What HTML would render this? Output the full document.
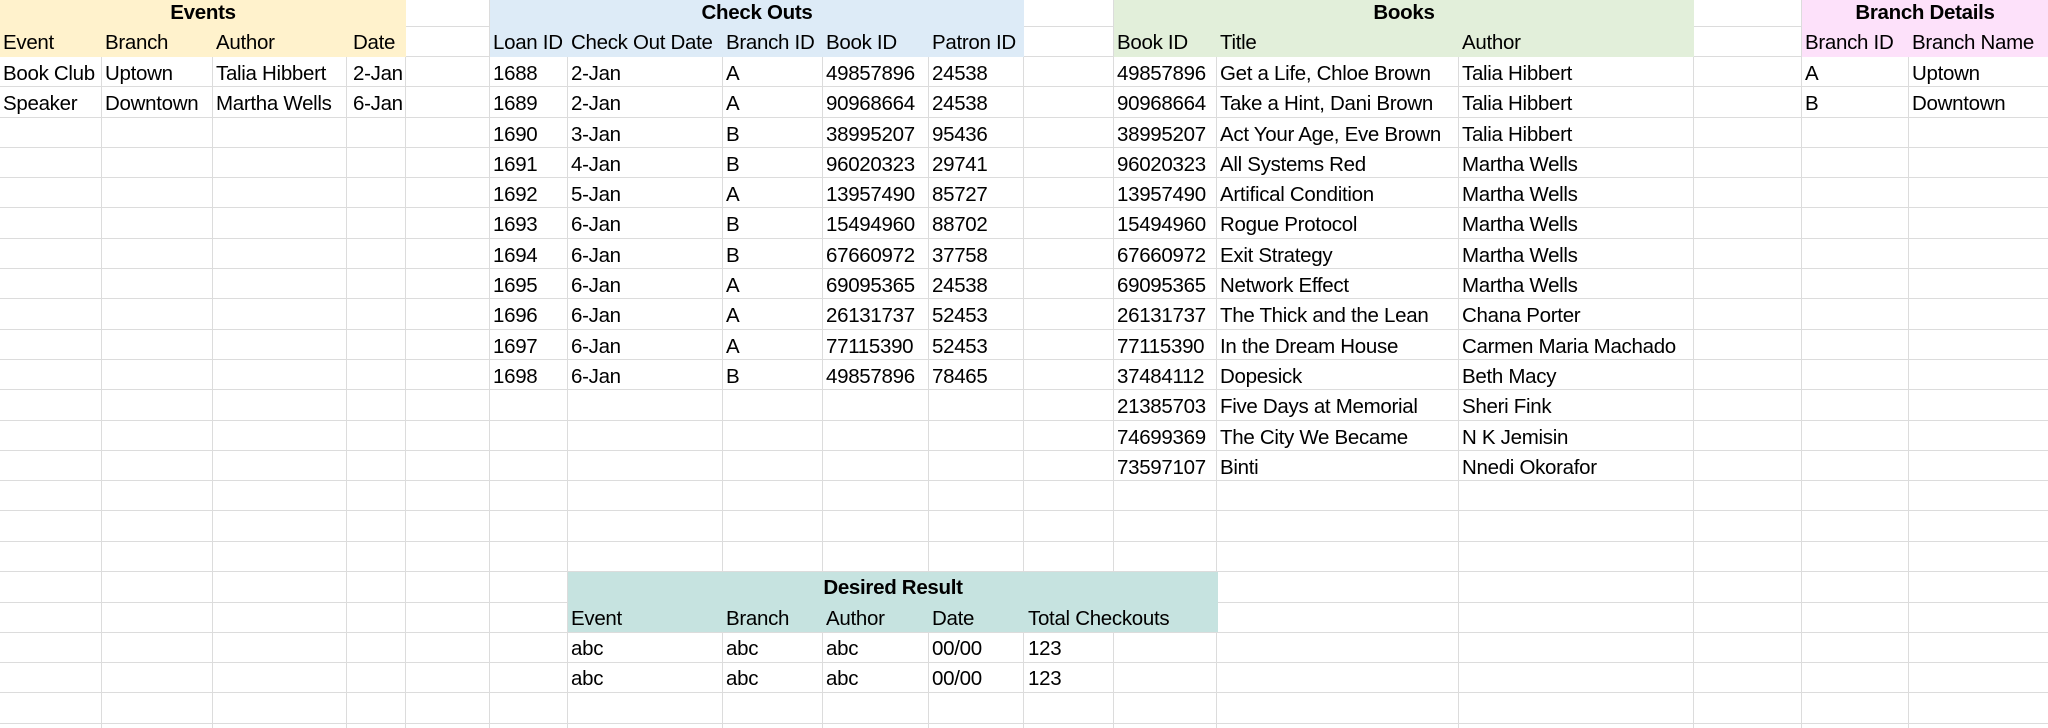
<!DOCTYPE html>
<html><head><meta charset="utf-8"><style>
*{margin:0;padding:0}
body{width:2048px;height:728px;position:relative;overflow:hidden;background:#fff;font-family:"Liberation Sans",Carlito,sans-serif;font-size:20.5px;color:#000;letter-spacing:-0.3px}
.h{position:absolute;left:0;width:2048px;height:1px;background:#dcdcdc}
.v{position:absolute;top:0;height:728px;width:1px;background:#dcdcdc}
.f{position:absolute}
.t{position:absolute;white-space:nowrap;line-height:30px;height:30px;padding-left:3px}
.b{font-weight:bold;text-align:center;padding-left:0}
</style></head><body>
<div class="h" style="top:26px"></div>
<div class="h" style="top:56px"></div>
<div class="h" style="top:86px"></div><div class="h" style="top:117px"></div><div class="h" style="top:147px"></div><div class="h" style="top:177px"></div><div class="h" style="top:207px"></div><div class="h" style="top:238px"></div><div class="h" style="top:268px"></div><div class="h" style="top:298px"></div><div class="h" style="top:329px"></div><div class="h" style="top:359px"></div><div class="h" style="top:389px"></div><div class="h" style="top:420px"></div><div class="h" style="top:450px"></div><div class="h" style="top:480px"></div><div class="h" style="top:510px"></div><div class="h" style="top:541px"></div><div class="h" style="top:571px"></div><div class="h" style="top:602px"></div><div class="h" style="top:632px"></div><div class="h" style="top:662px"></div><div class="h" style="top:692px"></div><div class="h" style="top:723px"></div>
<div class="v" style="left:101px"></div><div class="v" style="left:212px"></div><div class="v" style="left:346px"></div><div class="v" style="left:405px"></div><div class="v" style="left:489px"></div><div class="v" style="left:567px"></div><div class="v" style="left:722px"></div><div class="v" style="left:822px"></div><div class="v" style="left:928px"></div><div class="v" style="left:1023px"></div><div class="v" style="left:1113px"></div><div class="v" style="left:1216px"></div><div class="v" style="left:1458px"></div><div class="v" style="left:1693px"></div><div class="v" style="left:1801px"></div><div class="v" style="left:1908px"></div>
<div class="f" style="left:0;top:0;width:406px;height:57px;background:#fff2cc"></div>
<div class="f" style="left:490px;top:0;width:534px;height:57px;background:#ddebf7"></div>
<div class="f" style="left:1114px;top:0;width:580px;height:57px;background:#e2efda"></div>
<div class="f" style="left:1802px;top:0;width:246px;height:57px;background:#fde1fa"></div>
<div class="f" style="left:568px;top:572px;width:650px;height:60px;background:#c6e3e0"></div>

<div class="t b" style="left:0;width:406px;top:-2px">Events</div>
<div class="t b" style="left:490px;width:534px;top:-2px">Check Outs</div>
<div class="t b" style="left:1114px;width:580px;top:-2px">Books</div>
<div class="t b" style="left:1802px;width:246px;top:-2px">Branch Details</div>
<div class="t b" style="left:568px;width:650px;top:573px">Desired Result</div>

<div style="position:absolute;top:28px;left:0">
<span class="t" style="left:0">Event</span><span class="t" style="left:102px">Branch</span><span class="t" style="left:213px">Author</span><span class="t" style="left:350px">Date</span>
<span class="t" style="left:490px">Loan ID</span><span class="t" style="left:568px">Check Out Date</span><span class="t" style="left:723px">Branch ID</span><span class="t" style="left:823px">Book ID</span><span class="t" style="left:929px">Patron ID</span>
<span class="t" style="left:1114px">Book ID</span><span class="t" style="left:1217px">Title</span><span class="t" style="left:1459px">Author</span>
<span class="t" style="left:1802px">Branch ID</span><span class="t" style="left:1909px">Branch Name</span>
</div>

<div style="position:absolute;top:59px;left:0">
<span class="t" style="left:0">Book Club</span><span class="t" style="left:102px">Uptown</span><span class="t" style="left:213px">Talia Hibbert</span><span class="t" style="left:350px">2-Jan</span>
<span class="t" style="left:1802px">A</span><span class="t" style="left:1909px">Uptown</span></div>
<div style="position:absolute;top:89px;left:0">
<span class="t" style="left:0">Speaker</span><span class="t" style="left:102px">Downtown</span><span class="t" style="left:213px">Martha Wells</span><span class="t" style="left:350px">6-Jan</span>
<span class="t" style="left:1802px">B</span><span class="t" style="left:1909px">Downtown</span></div>

<div style="position:absolute;top:59px;left:0;line-height:30.3px">
<div style="position:absolute;left:490px;width:80px;padding-left:3px;line-height:30.3px">1688<br>1689<br>1690<br>1691<br>1692<br>1693<br>1694<br>1695<br>1696<br>1697<br>1698</div>
<div style="position:absolute;left:568px;width:150px;padding-left:3px;line-height:30.3px">2-Jan<br>2-Jan<br>3-Jan<br>4-Jan<br>5-Jan<br>6-Jan<br>6-Jan<br>6-Jan<br>6-Jan<br>6-Jan<br>6-Jan</div>
<div style="position:absolute;left:723px;width:90px;padding-left:3px;line-height:30.3px">A<br>A<br>B<br>B<br>A<br>B<br>B<br>A<br>A<br>A<br>B</div>
<div style="position:absolute;left:823px;width:100px;padding-left:3px;line-height:30.3px">49857896<br>90968664<br>38995207<br>96020323<br>13957490<br>15494960<br>67660972<br>69095365<br>26131737<br>77115390<br>49857896</div>
<div style="position:absolute;left:929px;width:90px;padding-left:3px;line-height:30.3px">24538<br>24538<br>95436<br>29741<br>85727<br>88702<br>37758<br>24538<br>52453<br>52453<br>78465</div>
<div style="position:absolute;left:1114px;width:100px;padding-left:3px;line-height:30.3px">49857896<br>90968664<br>38995207<br>96020323<br>13957490<br>15494960<br>67660972<br>69095365<br>26131737<br>77115390<br>37484112<br>21385703<br>74699369<br>73597107</div>
<div style="position:absolute;left:1217px;width:240px;padding-left:3px;line-height:30.3px;white-space:nowrap">Get a Life, Chloe Brown<br>Take a Hint, Dani Brown<br>Act Your Age, Eve Brown<br>All Systems Red<br>Artifical Condition<br>Rogue Protocol<br>Exit Strategy<br>Network Effect<br>The Thick and the Lean<br>In the Dream House<br>Dopesick<br>Five Days at Memorial<br>The City We Became<br>Binti</div>
<div style="position:absolute;left:1459px;width:240px;padding-left:3px;line-height:30.3px;white-space:nowrap">Talia Hibbert<br>Talia Hibbert<br>Talia Hibbert<br>Martha Wells<br>Martha Wells<br>Martha Wells<br>Martha Wells<br>Martha Wells<br>Chana Porter<br>Carmen Maria Machado<br>Beth Macy<br>Sheri Fink<br>N K Jemisin<br>Nnedi Okorafor</div>
</div>
<div style="position:absolute;top:604px;left:0">
<span class="t" style="left:568px">Event</span><span class="t" style="left:723px">Branch</span><span class="t" style="left:823px">Author</span><span class="t" style="left:929px">Date</span><span class="t" style="left:1025px">Total Checkouts</span></div>
<div style="position:absolute;top:634px;left:0">
<span class="t" style="left:568px">abc</span><span class="t" style="left:723px">abc</span><span class="t" style="left:823px">abc</span><span class="t" style="left:929px">00/00</span><span class="t" style="left:1025px">123</span></div>
<div style="position:absolute;top:664px;left:0">
<span class="t" style="left:568px">abc</span><span class="t" style="left:723px">abc</span><span class="t" style="left:823px">abc</span><span class="t" style="left:929px">00/00</span><span class="t" style="left:1025px">123</span></div>
</body></html>
